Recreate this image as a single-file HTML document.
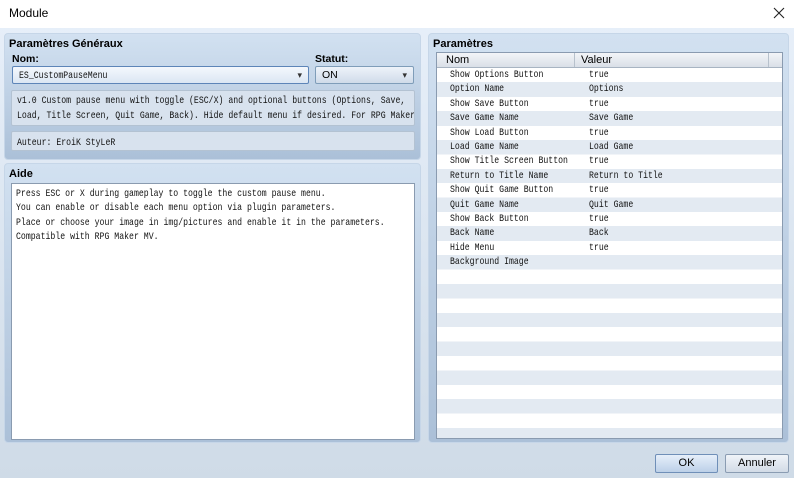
<!DOCTYPE html><html><head><style>
*{box-sizing:border-box;margin:0;padding:0}
body{width:794px;height:478px;overflow:hidden;font-family:"Liberation Sans",sans-serif;background:linear-gradient(#e8f0fa,#cfdbe7);position:relative}
.title{position:absolute;left:0;top:0;width:794px;height:28px;background:#fff;font-size:12px;color:#000}
.title span{position:absolute;left:9px;top:6px}
.x{position:absolute;right:9px;top:7px}
.panel{position:absolute;border-radius:4px;background:linear-gradient(#d2e1f1,#abc0d8);border:1px solid #c6d6e8}
.h{position:absolute;font-weight:bold;font-size:11px;color:#000}
.sq{display:inline-block;transform:scaleX(.78);transform-origin:0 0;white-space:nowrap;font-family:"Liberation Mono","DejaVu Sans Mono",monospace;font-size:10.5px;color:#111}
.lab{position:absolute;font-weight:bold;font-size:10.5px}
.combo{position:absolute;border:1px solid #7f9db9;border-radius:2px;height:18px;font-size:10.5px;padding:2px 6px;background:linear-gradient(#eef3fa,#cfdbe9)}
.combo:after{content:"▾";position:absolute;right:6px;top:3px;font-size:9px;color:#333}
.box{position:absolute;border:1px solid #b3c2d2;border-radius:2px;background:#d8e2ee;padding:3px 5px;line-height:15px;overflow:hidden}
.white{position:absolute;background:#fff;border:1px solid #8a9bb0}
.row{position:relative;height:14.4px;line-height:15px}
.row:nth-child(even){background:#e3eaf2}
.row .a{position:absolute;left:13px;top:0}
.row .b{position:absolute;left:152px;top:0}
.hd{height:15px;background:linear-gradient(#f3f5f8,#d9dfe7);border-bottom:1px solid #a8b4c2;font-size:11px;position:relative}
.btn{position:absolute;height:19px;border:1px solid #8a9cb2;border-radius:2px;font-size:11px;text-align:center;line-height:17px;background:linear-gradient(#f0f4f9,#d2dbe6)}
</style></head><body>
<div class="title"><span>Module</span><svg class="x" width="12" height="12" viewBox="0 0 12 12"><path d="M1 1L11 11M11 1L1 11" stroke="#222" stroke-width="1.1"/></svg></div>
<div class="panel" style="left:4px;top:33px;width:417px;height:127px">
<div class="h" style="left:4px;top:4px">Paramètres Généraux</div>
<div class="lab" style="left:7px;top:19px">Nom:</div>
<div class="lab" style="left:310px;top:19px">Statut:</div>
<div class="combo" style="left:7px;top:32px;width:297px;border-color:#5d85b8;background:linear-gradient(#f4f8fd,#dbe6f3)"><span class="sq" style="margin-top:1px">ES_CustomPauseMenu</span></div>
<div class="combo" style="left:310px;top:32px;width:99px">ON</div>
<div class="box" style="left:6px;top:56px;width:404px;height:36px"><span class="sq">v1.0 Custom pause menu with toggle (ESC/X) and optional buttons (Options, Save,<br>Load, Title Screen, Quit Game, Back). Hide default menu if desired. For RPG Maker</span></div>
<div class="box" style="left:6px;top:97px;width:404px;height:20px;line-height:12px"><span class="sq">Auteur: EroiK StyLeR</span></div>
</div>
<div class="panel" style="left:4px;top:163px;width:417px;height:280px">
<div class="h" style="left:4px;top:4px">Aide</div>
<div class="white" style="left:6px;top:19px;width:404px;height:257px;padding:3px 4px;line-height:14.3px"><span class="sq" style="line-height:14.3px">Press ESC or X during gameplay to toggle the custom pause menu.<br>You can enable or disable each menu option via plugin parameters.<br>Place or choose your image in img/pictures and enable it in the parameters.<br>Compatible with RPG Maker MV.</span></div>
</div>
<div class="panel" style="left:428px;top:33px;width:361px;height:410px">
<div class="h" style="left:4px;top:4px">Paramètres</div>
<div class="white" style="left:7px;top:18px;width:347px;height:387px;overflow:hidden;background:repeating-linear-gradient(#fff 0 14.4px,#e3eaf2 14.4px 28.8px) 0 15px/100% auto no-repeat">
<div class="hd"><span style="position:absolute;left:9px;top:1px">Nom</span><span style="position:absolute;left:144px;top:1px">Valeur</span><span style="position:absolute;left:137px;top:0;height:14px;border-left:1px solid #b7c1cc"></span><span style="position:absolute;left:331px;top:0;height:14px;border-left:1px solid #b7c1cc"></span></div>
<div>
<div class="row"><span class="a sq">Show Options Button</span><span class="b sq">true</span></div>
<div class="row"><span class="a sq">Option Name</span><span class="b sq">Options</span></div>
<div class="row"><span class="a sq">Show Save Button</span><span class="b sq">true</span></div>
<div class="row"><span class="a sq">Save Game Name</span><span class="b sq">Save Game</span></div>
<div class="row"><span class="a sq">Show Load Button</span><span class="b sq">true</span></div>
<div class="row"><span class="a sq">Load Game Name</span><span class="b sq">Load Game</span></div>
<div class="row"><span class="a sq">Show Title Screen Button</span><span class="b sq">true</span></div>
<div class="row"><span class="a sq">Return to Title Name</span><span class="b sq">Return to Title</span></div>
<div class="row"><span class="a sq">Show Quit Game Button</span><span class="b sq">true</span></div>
<div class="row"><span class="a sq">Quit Game Name</span><span class="b sq">Quit Game</span></div>
<div class="row"><span class="a sq">Show Back Button</span><span class="b sq">true</span></div>
<div class="row"><span class="a sq">Back Name</span><span class="b sq">Back</span></div>
<div class="row"><span class="a sq">Hide Menu</span><span class="b sq">true</span></div>
<div class="row"><span class="a sq">Background Image</span></div>
</div>
</div>
</div>
<div class="btn" style="left:655px;top:454px;width:63px;border-color:#6f8fb8;background:linear-gradient(#e6effa,#bcd0e8)">OK</div>
<div class="btn" style="left:725px;top:454px;width:64px">Annuler</div>
</body></html>
